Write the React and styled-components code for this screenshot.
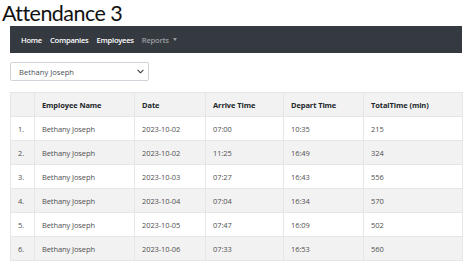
import React from "react";
import styled, { createGlobalStyle } from "styled-components";

const GlobalStyle = createGlobalStyle`
  body {
    margin: 0;
    background: #ffffff;
    font-family: "Open Sans", "Noto Sans", sans-serif;
    color: #212529;
  }
`;

const rows = [
  ["2023-10-02", "07:00", "10:35", "215"],
  ["2023-10-02", "11:25", "16:49", "324"],
  ["2023-10-03", "07:27", "16:43", "556"],
  ["2023-10-04", "07:04", "16:34", "570"],
  ["2023-10-05", "07:47", "16:09", "502"],
  ["2023-10-06", "07:33", "16:53", "560"],
];

const Page = styled.div`
  padding: 0 12px 0 10px;
`;

const Title = styled.h1`
  margin: 0 0 0 -8px;
  font-family: Lato, "Open Sans", sans-serif;
  font-size: 21.5px;
  letter-spacing: -0.55px;
  font-weight: 400;
  line-height: 26px;
  color: #111;
`;

const Navbar = styled.nav`
  display: flex;
  align-items: center;
  gap: 8px;
  height: 27px;
  padding: 0 11px;
  background: #343a40;
`;

const NavLink = styled.a`
  font-size: 7.6px;
  letter-spacing: -0.25px;
  font-weight: 600;
  color: ${(p) => (p.muted ? "#9a9da0" : "#ffffff")};
  text-decoration: none;
  display: flex;
  align-items: center;
  gap: 4px;
`;

const Caret = styled.span`
  width: 0;
  height: 0;
  border-left: 2.5px solid transparent;
  border-right: 2.5px solid transparent;
  border-top: 3px solid #9a9da0;
`;

const SelectBox = styled.div`
  margin-top: 9px;
  width: 139px;
  height: 19px;
  box-sizing: border-box;
  border: 1px solid #ced4da;
  border-radius: 2px;
  display: flex;
  align-items: center;
  justify-content: space-between;
  padding: 0 4px 0 8px;
  font-size: 7.6px;
  color: #495057;
`;

const Table = styled.table`
  margin-top: 11px;
  width: 452px;
  border-collapse: collapse;
  font-size: 7.5px;
  letter-spacing: -0.1px;
  table-layout: fixed;
`;

const Th = styled.th`
  width: ${(p) => p.w}px;
  height: 24px;
  box-sizing: border-box;
  text-align: left;
  padding: 0 7px;
  font-weight: 700;
  color: #212529;
  border: 1px solid #e4e6e8;
  background: #f2f2f2;
`;

const Tr = styled.tr`
  background: ${(p) => (p.striped ? "#f2f2f2" : "#ffffff")};
`;

const Td = styled.td`
  height: 23px;
  padding: 0 7px;
  color: #505050;
  border: 1px solid #e4e6e8;
`;

function Chevron() {
  return (
    <svg width="7" height="7" viewBox="0 0 16 16">
      <path
        d="M2 5l6 6 6-6"
        fill="none"
        stroke="#343a40"
        strokeWidth="2.4"
        strokeLinecap="round"
        strokeLinejoin="round"
      />
    </svg>
  );
}

export default function App() {
  return (
    <>
      <GlobalStyle />
      <Page>
        <Title>Attendance 3</Title>
        <Navbar>
          <NavLink>Home</NavLink>
          <NavLink>Companies</NavLink>
          <NavLink>Employees</NavLink>
          <NavLink muted>
            Reports <Caret />
          </NavLink>
        </Navbar>
        <SelectBox>
          Bethany Joseph
          <Chevron />
        </SelectBox>
        <Table>
          <thead>
            <tr>
              <Th w={24} />
              <Th w={100}>Employee Name</Th>
              <Th w={71}>Date</Th>
              <Th w={78}>Arrive Time</Th>
              <Th w={80}>Depart Time</Th>
              <Th w={99}>TotalTime (min)</Th>
            </tr>
          </thead>
          <tbody>
            {rows.map((r, i) => (
              <Tr key={i} striped={i % 2 === 1}>
                <Td>{i + 1}.</Td>
                <Td>Bethany Joseph</Td>
                {r.map((c, j) => (
                  <Td key={j}>{c}</Td>
                ))}
              </Tr>
            ))}
          </tbody>
        </Table>
      </Page>
    </>
  );
}
